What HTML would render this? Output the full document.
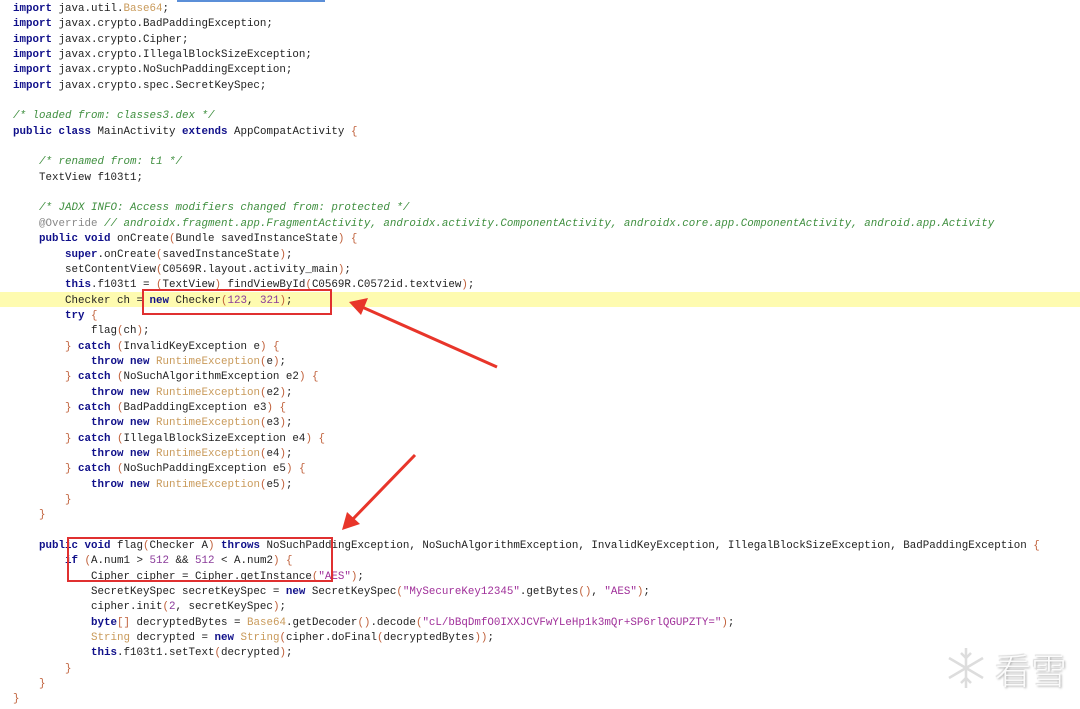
<!DOCTYPE html>
<html><head><meta charset="utf-8"><style>
html,body{margin:0;padding:0;background:#fff;width:1080px;height:709px;overflow:hidden;position:relative}
pre{position:absolute;left:13px;top:2px;margin:0;font-family:"Liberation Mono",monospace;font-size:10.83px;line-height:15.35px;color:#222;z-index:2}
.k{color:#10108a;font-weight:bold}
.c{color:#3f8f3f;font-style:italic}
.s{color:#a0309a}
.t{color:#c99a5a}
.p{color:#c0603a}
.n{color:#8a3a9a}
.a{color:#888}
.hl{position:absolute;left:0;top:292px;width:1080px;height:15px;background:#fefbb0;z-index:1}
.box{position:absolute;border:2px solid #e03030;z-index:3}
.wm{position:absolute;left:995px;top:647px;font-family:"Noto Sans CJK SC",sans-serif;font-size:36px;color:#fbfbfb;text-shadow:1px 1px 2px #aaa,-1px -1px 1px #ddd;z-index:4;line-height:44px;font-weight:300}
</style></head><body>
<div style="position:absolute;left:177px;top:0;width:148px;height:2px;background:#5b8fd8"></div>
<div class="hl"></div>
<pre><span class="k">import</span> java.util.<span class="t">Base64</span>;
<span class="k">import</span> javax.crypto.BadPaddingException;
<span class="k">import</span> javax.crypto.Cipher;
<span class="k">import</span> javax.crypto.IllegalBlockSizeException;
<span class="k">import</span> javax.crypto.NoSuchPaddingException;
<span class="k">import</span> javax.crypto.spec.SecretKeySpec;

<span class="c">/* loaded from: classes3.dex */</span>
<span class="k">public class</span> MainActivity <span class="k">extends</span> AppCompatActivity <span class="p">{</span>

    <span class="c">/* renamed from: t1 */</span>
    TextView f103t1;

    <span class="c">/* JADX INFO: Access modifiers changed from: protected */</span>
    <span class="a">@Override</span> <span class="c">// androidx.fragment.app.FragmentActivity, androidx.activity.ComponentActivity, androidx.core.app.ComponentActivity, android.app.Activity</span>
    <span class="k">public void</span> onCreate<span class="p">(</span>Bundle savedInstanceState<span class="p">)</span> <span class="p">{</span>
        <span class="k">super</span>.onCreate<span class="p">(</span>savedInstanceState<span class="p">)</span>;
        setContentView<span class="p">(</span>C0569R.layout.activity_main<span class="p">)</span>;
        <span class="k">this</span>.f103t1 = <span class="p">(</span>TextView<span class="p">)</span> findViewById<span class="p">(</span>C0569R.C0572id.textview<span class="p">)</span>;
        Checker ch = <span class="k">new</span> Checker<span class="p">(</span><span class="n">123</span>, <span class="n">321</span><span class="p">)</span>;
        <span class="k">try</span> <span class="p">{</span>
            flag<span class="p">(</span>ch<span class="p">)</span>;
        <span class="p">}</span> <span class="k">catch</span> <span class="p">(</span>InvalidKeyException e<span class="p">)</span> <span class="p">{</span>
            <span class="k">throw new</span> <span class="t">RuntimeException</span><span class="p">(</span>e<span class="p">)</span>;
        <span class="p">}</span> <span class="k">catch</span> <span class="p">(</span>NoSuchAlgorithmException e2<span class="p">)</span> <span class="p">{</span>
            <span class="k">throw new</span> <span class="t">RuntimeException</span><span class="p">(</span>e2<span class="p">)</span>;
        <span class="p">}</span> <span class="k">catch</span> <span class="p">(</span>BadPaddingException e3<span class="p">)</span> <span class="p">{</span>
            <span class="k">throw new</span> <span class="t">RuntimeException</span><span class="p">(</span>e3<span class="p">)</span>;
        <span class="p">}</span> <span class="k">catch</span> <span class="p">(</span>IllegalBlockSizeException e4<span class="p">)</span> <span class="p">{</span>
            <span class="k">throw new</span> <span class="t">RuntimeException</span><span class="p">(</span>e4<span class="p">)</span>;
        <span class="p">}</span> <span class="k">catch</span> <span class="p">(</span>NoSuchPaddingException e5<span class="p">)</span> <span class="p">{</span>
            <span class="k">throw new</span> <span class="t">RuntimeException</span><span class="p">(</span>e5<span class="p">)</span>;
        <span class="p">}</span>
    <span class="p">}</span>

    <span class="k">public void</span> flag<span class="p">(</span>Checker A<span class="p">)</span> <span class="k">throws</span> NoSuchPaddingException, NoSuchAlgorithmException, InvalidKeyException, IllegalBlockSizeException, BadPaddingException <span class="p">{</span>
        <span class="k">if</span> <span class="p">(</span>A.num1 &gt; <span class="n">512</span> &amp;&amp; <span class="n">512</span> &lt; A.num2<span class="p">)</span> <span class="p">{</span>
            Cipher cipher = Cipher.getInstance<span class="p">(</span><span class="s">"AES"</span><span class="p">)</span>;
            SecretKeySpec secretKeySpec = <span class="k">new</span> SecretKeySpec<span class="p">(</span><span class="s">"MySecureKey12345"</span>.getBytes<span class="p">()</span>, <span class="s">"AES"</span><span class="p">)</span>;
            cipher.init<span class="p">(</span><span class="n">2</span>, secretKeySpec<span class="p">)</span>;
            <span class="k">byte</span><span class="p">[]</span> decryptedBytes = <span class="t">Base64</span>.getDecoder<span class="p">()</span>.decode<span class="p">(</span><span class="s">"cL/bBqDmfO0IXXJCVFwYLeHp1k3mQr+SP6rlQGUPZTY="</span><span class="p">)</span>;
            <span class="t">String</span> decrypted = <span class="k">new</span> <span class="t">String</span><span class="p">(</span>cipher.doFinal<span class="p">(</span>decryptedBytes<span class="p">))</span>;
            <span class="k">this</span>.f103t1.setText<span class="p">(</span>decrypted<span class="p">)</span>;
        <span class="p">}</span>
    <span class="p">}</span>
<span class="p">}</span></pre>
<div class="box" style="left:142px;top:289px;width:186px;height:22px"></div>
<div class="box" style="left:67px;top:537px;width:262px;height:41px"></div>
<svg style="position:absolute;left:0;top:0;z-index:4" width="1080" height="709">
<line x1="497" y1="367" x2="362" y2="307" stroke="#e8352a" stroke-width="3"/>
<polygon points="349,302 368,298 361,315" fill="#e8352a"/>
<line x1="415" y1="455" x2="352" y2="520" stroke="#e8352a" stroke-width="3"/>
<polygon points="342,530 347,512 360,524" fill="#e8352a"/>
<g stroke="#ddd" stroke-width="2.5" fill="none" transform="translate(966,668)">
<line x1="0" y1="-20" x2="0" y2="20"/><line x1="-17" y1="-10" x2="17" y2="10"/><line x1="-17" y1="10" x2="17" y2="-10"/>
<path d="M-5,-15 L0,-10 L5,-15 M-5,15 L0,10 L5,15"/>
</g>
</svg>
<div class="wm">看雪</div>
</body></html>
